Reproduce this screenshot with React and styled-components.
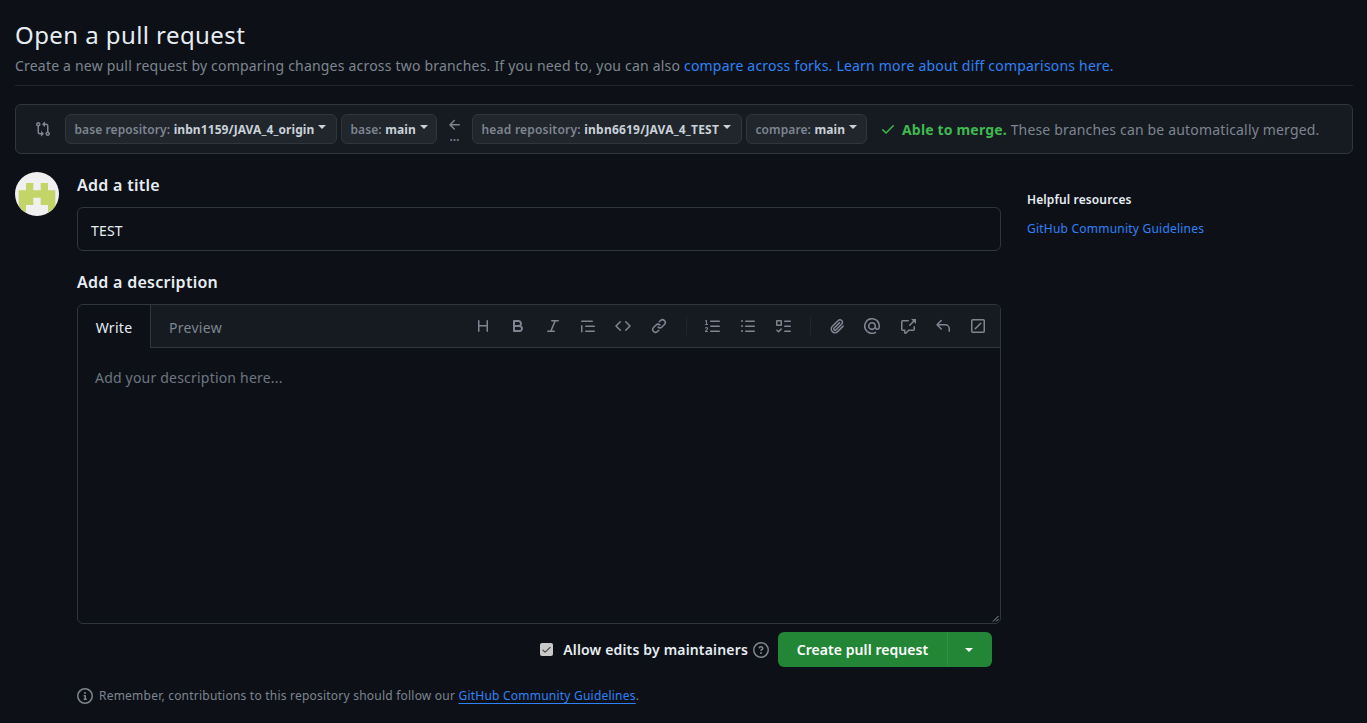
import React from "react";
import styled, { createGlobalStyle } from "styled-components";

const Global = createGlobalStyle`
  html, body { margin: 0; background: #0d1117; }
  body { font-family: "Noto Sans", "Open Sans", sans-serif; color: #e6edf3; font-size: 14px; }
  * { box-sizing: border-box; }
`;

const P = {
  compare: "M9.573.677A.25.25 0 0 1 10 .854V2.5h1A2.5 2.5 0 0 1 13.5 5v5.628a2.251 2.251 0 1 1-1.5 0V5a1 1 0 0 0-1-1h-1v1.646a.25.25 0 0 1-.427.177L7.177 3.427a.25.25 0 0 1 0-.354ZM6 12v-1.646a.25.25 0 0 1 .427-.177l2.396 2.396a.25.25 0 0 1 0 .354l-2.396 2.396A.25.25 0 0 1 6 15.146V13.5H5A2.5 2.5 0 0 1 2.5 11V5.372a2.25 2.25 0 1 1 1.5 0V11a1 1 0 0 0 1 1ZM4 3.25a.75.75 0 1 0-1.5 0 .75.75 0 0 0 1.5 0ZM12.75 12a.75.75 0 1 0 0 1.5.75.75 0 0 0 0-1.5Z",
  arrow: "M7.78 12.53a.75.75 0 0 1-1.06 0L2.47 8.28a.751.751 0 0 1 0-1.06l4.25-4.25a.751.751 0 0 1 1.042.018.751.751 0 0 1 .018 1.042L4.81 7h7.44a.75.75 0 0 1 0 1.5H4.81l2.97 2.97a.75.75 0 0 1 0 1.06Z",
  check: "M13.78 4.22a.75.75 0 0 1 0 1.06l-7.25 7.25a.75.75 0 0 1-1.06 0L2.22 9.28a.751.751 0 0 1 .018-1.042.751.751 0 0 1 1.042-.018L6 10.94l6.72-6.72a.75.75 0 0 1 1.06 0Z",
  heading: "M3.75 2a.75.75 0 0 1 .75.75V7h7V2.75a.75.75 0 0 1 1.5 0v10.5a.75.75 0 0 1-1.5 0V8.5h-7v4.75a.75.75 0 0 1-1.5 0V2.75A.75.75 0 0 1 3.75 2Z",
  bold: "M4 2h4.5a3.501 3.501 0 0 1 2.852 5.53A3.499 3.499 0 0 1 9.5 14H4a1 1 0 0 1-1-1V3a1 1 0 0 1 1-1Zm1 7v3h4.5a1.5 1.5 0 0 0 0-3Zm3.5-2a1.5 1.5 0 0 0 0-3H5v3Z",
  italic: "M6 2.75A.75.75 0 0 1 6.75 2h6.5a.75.75 0 0 1 0 1.5h-2.505l-3.858 9H9.25a.75.75 0 0 1 0 1.5h-6.5a.75.75 0 0 1 0-1.5h2.505l3.858-9H6.75A.75.75 0 0 1 6 2.75Z",
  quote: "M1.75 2.5h10.5a.75.75 0 0 1 0 1.5H1.75a.75.75 0 0 1 0-1.5Zm4 5h8.5a.75.75 0 0 1 0 1.5h-8.5a.75.75 0 0 1 0-1.5Zm0 5h8.5a.75.75 0 0 1 0 1.5h-8.5a.75.75 0 0 1 0-1.5ZM2.5 7.75v6a.75.75 0 0 1-1.5 0v-6a.75.75 0 0 1 1.5 0Z",
  code: "m11.28 3.22 4.25 4.25a.75.75 0 0 1 0 1.06l-4.25 4.25a.749.749 0 0 1-1.275-.326.749.749 0 0 1 .215-.734L13.94 8l-3.72-3.72a.749.749 0 0 1 .326-1.275.749.749 0 0 1 .734.215Zm-6.56 0a.751.751 0 0 1 1.042.018.751.751 0 0 1 .018 1.042L2.06 8l3.72 3.72a.749.749 0 0 1-.326 1.275.749.749 0 0 1-.734-.215L.47 8.53a.75.75 0 0 1 0-1.06Z",
  link: "m7.775 3.275 1.25-1.25a3.5 3.5 0 1 1 4.95 4.95l-2.5 2.5a3.5 3.5 0 0 1-4.95 0 .751.751 0 0 1 .018-1.042.751.751 0 0 1 1.042-.018 1.998 1.998 0 0 0 2.83 0l2.5-2.5a2.002 2.002 0 0 0-2.83-2.83l-1.25 1.25a.751.751 0 0 1-1.042-.018.751.751 0 0 1-.018-1.042Zm-4.69 9.64a1.998 1.998 0 0 0 2.83 0l1.25-1.25a.751.751 0 0 1 1.042.018.751.751 0 0 1 .018 1.042l-1.25 1.25a3.5 3.5 0 1 1-4.95-4.95l2.5-2.5a3.5 3.5 0 0 1 4.95 0 .751.751 0 0 1-.018 1.042.751.751 0 0 1-1.042.018 1.998 1.998 0 0 0-2.83 0l-2.5 2.5a1.998 1.998 0 0 0 0 2.83Z",
  ordered: "M5 3.25a.75.75 0 0 1 .75-.75h8.5a.75.75 0 0 1 0 1.5h-8.5A.75.75 0 0 1 5 3.25Zm0 5a.75.75 0 0 1 .75-.75h8.5a.75.75 0 0 1 0 1.5h-8.5A.75.75 0 0 1 5 8.25Zm0 5a.75.75 0 0 1 .75-.75h8.5a.75.75 0 0 1 0 1.5h-8.5a.75.75 0 0 1-.75-.75ZM.924 10.32a.5.5 0 0 1-.851-.525l.001-.001.001-.002.002-.004.007-.011c.097-.144.215-.273.348-.384.228-.19.588-.392 1.068-.392.468 0 .858.181 1.126.484.259.294.377.673.377 1.038 0 .987-.686 1.495-1.156 1.845l-.047.035c-.303.225-.522.4-.654.597h1.357a.5.5 0 0 1 0 1H.5a.5.5 0 0 1-.5-.5c0-1.005.692-1.52 1.167-1.875l.035-.025c.531-.396.8-.625.8-1.078a.57.57 0 0 0-.128-.376C1.806 10.068 1.695 10 1.5 10a.658.658 0 0 0-.429.163.835.835 0 0 0-.144.153ZM2.003 2.5V6h.503a.5.5 0 0 1 0 1H.5a.5.5 0 0 1 0-1h.503V3.308l-.28.14a.5.5 0 0 1-.446-.895l1.003-.5a.5.5 0 0 1 .723.447Z",
  unordered: "M5.75 2.5h8.5a.75.75 0 0 1 0 1.5h-8.5a.75.75 0 0 1 0-1.5Zm0 5h8.5a.75.75 0 0 1 0 1.5h-8.5a.75.75 0 0 1 0-1.5Zm0 5h8.5a.75.75 0 0 1 0 1.5h-8.5a.75.75 0 0 1 0-1.5ZM2 14a1 1 0 1 1 0-2 1 1 0 0 1 0 2Zm1-6a1 1 0 1 1-2 0 1 1 0 0 1 2 0ZM2 4a1 1 0 1 1 0-2 1 1 0 0 1 0 2Z",
  tasklist: "M2 2h4a1 1 0 0 1 1 1v4a1 1 0 0 1-1 1H2a1 1 0 0 1-1-1V3a1 1 0 0 1 1-1Zm4.655 8.595a.75.75 0 0 1 0 1.06L4.03 14.28a.75.75 0 0 1-1.06 0l-1.5-1.5a.749.749 0 0 1 .326-1.275.749.749 0 0 1 .734.215l.97.97 2.095-2.095a.75.75 0 0 1 1.06 0ZM9.75 2.5h5.5a.75.75 0 0 1 0 1.5h-5.5a.75.75 0 0 1 0-1.5Zm0 5h5.5a.75.75 0 0 1 0 1.5h-5.5a.75.75 0 0 1 0-1.5Zm0 5h5.5a.75.75 0 0 1 0 1.5h-5.5a.75.75 0 0 1 0-1.5Zm-7.25-9v3h3v-3Z",
  paperclip: "M12.212 3.02a1.753 1.753 0 0 0-2.478.003l-5.83 5.83a3.007 3.007 0 0 0-.88 2.127c0 .795.315 1.551.88 2.116.567.567 1.333.89 2.126.89.79 0 1.548-.321 2.116-.89l5.48-5.48a.75.75 0 0 1 1.061 1.06l-5.48 5.48a4.492 4.492 0 0 1-3.177 1.33c-1.2 0-2.345-.487-3.187-1.33a4.483 4.483 0 0 1-1.32-3.177c0-1.195.475-2.341 1.32-3.186l5.83-5.83a3.25 3.25 0 0 1 5.553 2.297c0 .863-.343 1.691-.953 2.301L7.439 12.39c-.375.377-.884.59-1.416.593a1.998 1.998 0 0 1-1.412-.593 1.992 1.992 0 0 1 0-2.828l5.48-5.48a.751.751 0 0 1 1.042.018.751.751 0 0 1 .018 1.042l-5.48 5.48a.492.492 0 0 0 0 .707.499.499 0 0 0 .706 0l5.833-5.827a1.75 1.75 0 0 0 0-2.481Z",
  mention: "M4.75 2.37a6.501 6.501 0 0 0 6.5 11.26.75.75 0 0 1 .75 1.298A7.999 7.999 0 0 1 .989 4.148 8 8 0 0 1 16 7.75v1.5a2.75 2.75 0 0 1-5.072 1.475 3.999 3.999 0 0 1-6.65-4.19A4 4 0 0 1 12 8v1.25a1.25 1.25 0 0 0 2.5 0V7.867a6.5 6.5 0 0 0-9.75-5.496ZM10.5 8a2.5 2.5 0 1 0-5 0 2.5 2.5 0 0 0 5 0Z",
  crossref: "M2.75 3.5a.25.25 0 0 0-.25.25v7.5c0 .138.112.25.25.25h2a.75.75 0 0 1 .75.75v2.19l2.72-2.72a.749.749 0 0 1 .53-.22h4.5a.25.25 0 0 0 .25-.25v-2.5a.75.75 0 0 1 1.5 0v2.5A1.75 1.75 0 0 1 13.25 13H9.06l-2.573 2.573A1.458 1.458 0 0 1 4 14.543V13H2.75A1.75 1.75 0 0 1 1 11.25v-7.5C1 2.784 1.784 2 2.75 2h5.5a.75.75 0 0 1 0 1.5ZM16 1.25v4.146a.25.25 0 0 1-.427.177L14.03 4.03l-3.75 3.75a.749.749 0 0 1-1.275-.326.749.749 0 0 1 .215-.734l3.75-3.75-1.543-1.543A.25.25 0 0 1 11.604 1h4.146a.25.25 0 0 1 .25.25Z",
  reply: "M6.78 1.97a.75.75 0 0 1 0 1.06L3.81 6h6.44A4.75 4.75 0 0 1 15 10.75v2.5a.75.75 0 0 1-1.5 0v-2.5a3.25 3.25 0 0 0-3.25-3.25H3.81l2.97 2.97a.749.749 0 0 1-.326 1.275.749.749 0 0 1-.734-.215L1.47 7.28a.75.75 0 0 1 0-1.06l4.25-4.25a.75.75 0 0 1 1.06 0Z",
  slash: "M13.25 1c.966 0 1.75.784 1.75 1.75v10.5A1.75 1.75 0 0 1 13.25 15H2.75A1.75 1.75 0 0 1 1 13.25V2.75C1 1.784 1.784 1 2.75 1ZM2.75 2.5a.25.25 0 0 0-.25.25v10.5c0 .138.112.25.25.25h10.5a.25.25 0 0 0 .25-.25V2.75a.25.25 0 0 0-.25-.25ZM11.28 4.72a.75.75 0 0 1 0 1.06l-5.5 5.5a.75.75 0 0 1-1.06-1.06l5.5-5.5a.75.75 0 0 1 1.06 0Z",
  question: "M0 8a8 8 0 1 1 16 0A8 8 0 0 1 0 8Zm8-6.5a6.5 6.5 0 1 0 0 13 6.5 6.5 0 0 0 0-13ZM6.92 6.085h.001a.749.749 0 1 1-1.342-.67c.169-.339.436-.701.849-.977C6.845 4.16 7.369 4 8 4a2.756 2.756 0 0 1 1.637.525c.503.377.863.965.863 1.725 0 .448-.115.83-.329 1.15-.205.307-.47.513-.692.662-.109.072-.22.138-.313.195l-.006.004a6.24 6.24 0 0 0-.26.16.952.952 0 0 0-.276.245.75.75 0 0 1-1.248-.832c.184-.264.42-.489.692-.661.103-.067.207-.132.313-.195l.007-.004c.1-.061.182-.11.258-.161a.969.969 0 0 0 .277-.245C8.96 6.514 9 6.406 9 6.25a.612.612 0 0 0-.262-.525A1.27 1.27 0 0 0 8 5.5c-.369 0-.595.09-.74.187a1.01 1.01 0 0 0-.34.398ZM9 11a1 1 0 1 1-2 0 1 1 0 0 1 2 0Z",
  info: "M0 8a8 8 0 1 1 16 0A8 8 0 0 1 0 8Zm8-6.5a6.5 6.5 0 1 0 0 13 6.5 6.5 0 0 0 0-13ZM6.5 7.75A.75.75 0 0 1 7.25 7h1a.75.75 0 0 1 .75.75v2.75h.25a.75.75 0 0 1 0 1.5h-2a.75.75 0 0 1 0-1.5h.25v-2h-.25a.75.75 0 0 1-.75-.75ZM8 6a1 1 0 1 1 0-2 1 1 0 0 1 0 2Z",
};

const Octicon = ({ name, size = 16, color = "#7d8590" }) => (
  <svg width={size} height={size} viewBox="0 0 16 16" fill={color} style={{ flex: "none", display: "block" }}>
    <path d={P[name]} fillRule="evenodd" />
  </svg>
);

const Page = styled.div`
  padding: 19px 14px 0 15px;
  width: 1367px;
  height: 723px;
  overflow: hidden;
`;
const Header = styled.header`
  height: 67px;
  border-bottom: 1px solid #21262d;
`;
const Title = styled.h1`
  margin: 0;
  font-size: 24px;
  line-height: 32px;
  font-weight: 400;
  color: #e6edf3;
  letter-spacing: 0.42px;
`;
const Sub = styled.p`
  margin: 4px 0 0;
  font-size: 14px;
  line-height: 21px;
  color: #7d8590;
  white-space: nowrap;
  letter-spacing: 0.2px;
`;
const Link = styled.a`
  color: #2f81f7;
  text-decoration: ${(p) => (p.$underline ? "underline" : "none")};
  text-underline-offset: 3px;
`;
const RangeBox = styled.div`
  margin-top: 18px;
  height: 50px;
  background: #161b22;
  border: 1px solid #30363d;
  border-radius: 6px;
  display: flex;
  align-items: center;
  padding-left: 19px;
`;
const RangeIcon = styled.span`
  width: 30px;
  flex: none;
`;
const Branch = styled.button`
  height: 30px;
  width: ${(p) => p.$w}px;
  margin-right: ${(p) => p.$mr ?? 4}px;
  padding: 2px 8px 0 8.5px;
  background: #21262d;
  border: 1px solid #30363d;
  border-radius: 6px;
  color: #7d8590;
  font: 600 12px/20px "Noto Sans", sans-serif;
  letter-spacing: ${(p) => p.$ls ?? 0.09}px;
  display: flex;
  align-items: center;
  white-space: nowrap;
  flex: none;
  b { color: #c9d1d9; font-weight: 700; margin-left: 3.5px; }
`;
const Caret = styled.i`
  display: inline-block;
  flex: none;
  width: 0;
  height: 0;
  margin-left: ${(p) => p.$ml ?? 4}px;
  margin-top: -6px;
  border-top: 4px solid ${(p) => p.$c ?? "#c9d1d9"};
  border-left: 4px solid transparent;
  border-right: 4px solid transparent;
`;
const GreenCaretMark = styled(Caret)`
  margin-top: -4px;
`;
const Between = styled.div`
  width: 35px;
  flex: none;
  display: flex;
  flex-direction: column;
  align-items: center;
  color: #7d8590;
  margin-top: 1px;
`;
const Dots = styled.span`
  font: 600 12px/8px "Noto Sans", sans-serif;
  color: #7d8590;
  height: 9px;
`;
const Merge = styled.div`
  margin-left: 13px;
  display: flex;
  align-items: center;
  gap: 6px;
  color: #7d8590;
  white-space: nowrap;
  letter-spacing: 0.17px;
  b { color: #3fb950; font-weight: 700; }
`;
const Main = styled.div`
  display: flex;
  margin-top: 18px;
`;
const Avatar = styled.svg`
  width: 44px;
  height: 44px;
  flex: none;
  border-radius: 50%;
  display: block;
  margin-right: 18px;
`;
const Form = styled.div`
  width: 924px;
  flex: none;
  padding-top: 1px;
`;
const Label = styled.div`
  font-size: 16px;
  line-height: 24px;
  font-weight: 600;
  color: #e6edf3;
  letter-spacing: 0.28px;
  margin-bottom: ${(p) => p.$mb ?? 10}px;
  margin-top: ${(p) => p.$mt ?? 0}px;
`;
const TitleInput = styled.div`
  height: 44px;
  border: 1px solid #30363d;
  border-radius: 6px;
  padding: 2px 13px 0;
  display: flex;
  align-items: center;
  font-size: 14px;
  color: #e6edf3;
  letter-spacing: 0.2px;
`;
const Editor = styled.div`
  height: 320px;
  border: 1px solid #30363d;
  border-radius: 6px;
  display: flex;
  flex-direction: column;
  position: relative;
`;
const EditorHead = styled.div`
  height: 43px;
  flex: none;
  background: #161b22;
  border-bottom: 1px solid #30363d;
  border-radius: 6px 6px 0 0;
  display: flex;
`;
const Tab = styled.div`
  width: ${(p) => p.$w}px;
  height: 43px;
  padding-top: 2px;
  flex: none;
  display: flex;
  align-items: center;
  justify-content: center;
  font-size: 14px;
  letter-spacing: 0.3px;
  color: ${(p) => (p.$active ? "#e6edf3" : "#7d8590")};
  background: ${(p) => (p.$active ? "#0d1117" : "transparent")};
  border-right: ${(p) => (p.$active ? "1px solid #30363d" : "0")};
  border-radius: ${(p) => (p.$active ? "6px 0 0 0" : "0")};
`;
const Tools = styled.div`
  margin-left: auto;
  padding-right: 14px;
  display: flex;
  align-items: center;
`;
const Tool = styled.span`
  width: 16px;
  height: 16px;
  margin-left: 19.2px;
  flex: none;
`;
const Sep = styled.span`
  width: 1px;
  height: 18px;
  background: #21262d;
  margin-left: 19px;
  margin-right: -1px;
  flex: none;
`;
const Placeholder = styled.div`
  padding: 19px 17px;
  font-size: 14px;
  line-height: 21px;
  color: #6e7681;
  letter-spacing: 0.2px;
`;
const Grip = styled.svg`
  position: absolute;
  right: 1px;
  bottom: 1px;
  width: 7px;
  height: 7px;
`;
const Actions = styled.div`
  display: flex;
  justify-content: flex-end;
  align-items: center;
  margin-top: 8px;
  padding-right: 9px;
`;
const Box = styled.span`
  width: 13px;
  height: 13px;
  background: #c9c9c9;
  border-radius: 2px;
  display: flex;
  align-items: center;
  justify-content: center;
  margin-right: 10px;
`;
const Allow = styled.span`
  font-weight: 600;
  color: #e6edf3;
  font-size: 14px;
  letter-spacing: 0.17px;
  margin-right: 5px;
`;
const Green = styled.div`
  margin-left: 9px;
  height: 35px;
  display: flex;
  background: #238636;
  border-radius: 6px;
  color: #fff;
  font-weight: 600;
  font-size: 14px;
  letter-spacing: 0.07px;
`;
const GreenMain = styled.span`
  width: 170px;
  display: flex;
  align-items: center;
  justify-content: center;
  border-right: 1px solid #2d9143;
`;
const GreenCaret = styled.span`
  width: 44px;
  display: flex;
  align-items: center;
  justify-content: center;
  padding: 5px 2px 0 0;
`;
const Note = styled.div`
  margin-top: 20px;
  display: flex;
  align-items: center;
  gap: 6px;
  font-size: 12px;
  line-height: 18px;
  color: #7d8590;
  white-space: nowrap;
  letter-spacing: 0.22px;
`;
const Side = styled.aside`
  margin-left: 26px;
  padding-top: 19px;
`;
const SideHead = styled.div`
  font-size: 12px;
  font-weight: 600;
  line-height: 18px;
  color: #e6edf3;
  letter-spacing: 0.12px;
  margin-bottom: 11px;
`;
const SideLink = styled(Link)`
  display: block;
  font-size: 12px;
  line-height: 18px;
  letter-spacing: 0.22px;
`;

const tools = [
  ["heading"], ["bold"], ["italic"], ["quote"], ["code"], ["link"], "sep",
  ["ordered"], ["unordered"], ["tasklist"], "sep",
  ["paperclip"], ["mention"], ["crossref"], ["reply"], ["slash"],
];

export default function App() {
  return (
    <Page>
      <Global />
      <Header>
        <Title>Open a pull request</Title>
        <Sub>
          Create a new pull request by comparing changes across two branches. If you need to, you can also{" "}
          <Link>compare across forks.</Link> <Link>Learn more about diff comparisons here.</Link>
        </Sub>
      </Header>
      <RangeBox>
        <RangeIcon><Octicon name="compare" /></RangeIcon>
        <Branch $w={272}>base repository:<b>inbn1159/JAVA_4_origin</b><Caret /></Branch>
        <Branch $w={96} $mr={0}>base:<b>main</b><Caret /></Branch>
        <Between><Octicon name="arrow" /><Dots>…</Dots></Between>
        <Branch $w={270} $ls={0.21}>head repository:<b>inbn6619/JAVA_4_TEST</b><Caret /></Branch>
        <Branch $w={121} $mr={0}>compare:<b>main</b><Caret /></Branch>
        <Merge>
          <Octicon name="check" color="#3fb950" />
          <span><b>Able to merge.</b> These branches can be automatically merged.</span>
        </Merge>
      </RangeBox>
      <Main>
        <Avatar viewBox="0 0 44 44">
          <rect width="44" height="44" fill="#f0f0f0" />
          <path fill="#c3d469" d="M11 11h7.33v7.33h7.34V11H33v7.33h7.33V40.33H33V33H11v7.33H3.67V18.33H11Z" />
          <path fill="#f0f0f0" d="M18.33 25.67h7.34V33h-7.34Z" />
        </Avatar>
        <Form>
          <Label>Add a title</Label>
          <TitleInput>TEST</TitleInput>
          <Label $mt={19} $mb={10}>Add a description</Label>
          <Editor>
            <EditorHead>
              <Tab $active $w={73}>Write</Tab>
              <Tab $w={89}>Preview</Tab>
              <Tools>
                {tools.map((t, i) =>
                  t === "sep" ? <Sep key={i} /> : <Tool key={i}><Octicon name={t[0]} /></Tool>
                )}
              </Tools>
            </EditorHead>
            <Placeholder>Add your description here...</Placeholder>
            <Grip viewBox="0 0 7 7"><path d="M6.5 1 1 6.5M6.5 4 4 6.5" stroke="#8b949e" strokeWidth="1" fill="none" /></Grip>
          </Editor>
          <Actions>
            <Box>
              <svg width="11" height="11" viewBox="0 0 16 16" fill="#3b3b3b"><path d={P.check} /></svg>
            </Box>
            <Allow>Allow edits by maintainers</Allow>
            <Octicon name="question" />
            <Green>
              <GreenMain>Create pull request</GreenMain>
              <GreenCaret><GreenCaretMark $c="#fff" $ml={0} /></GreenCaret>
            </Green>
          </Actions>
          <Note>
            <Octicon name="info" />
            <span>Remember, contributions to this repository should follow our <Link $underline>GitHub Community Guidelines</Link>.</span>
          </Note>
        </Form>
        <Side>
          <SideHead>Helpful resources</SideHead>
          <SideLink>GitHub Community Guidelines</SideLink>
        </Side>
      </Main>
    </Page>
  );
}
